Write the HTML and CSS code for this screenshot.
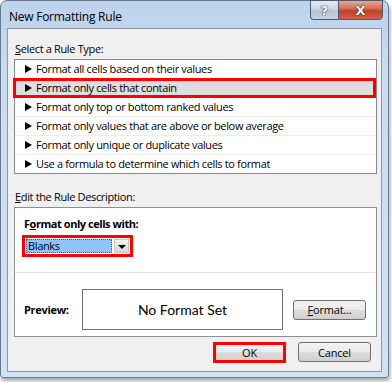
FILE: index.html
```html
<!DOCTYPE html>
<html lang="en">
<head>
    <meta charset="UTF-8">
    <title>New Formatting Rule</title>
    <link rel="stylesheet" href="styles.css">
</head>
<body>
    <div class="window">
        <div class="titlebar">
            <span class="title">New Formatting Rule</span>
            <div class="caption-buttons">
                <span class="caption-help">?</span>
                <span class="caption-close">X</span>
            </div>
        </div>

        <div class="client">
            <div class="label"><u>S</u>elect a Rule Type:</div>
            <ul class="rule-list">
                <li>Format all cells based on their values</li>
                <li class="selected">Format only cells that contain</li>
                <li>Format only top or bottom ranked values</li>
                <li>Format only values that are above or below average</li>
                <li>Format only unique or duplicate values</li>
                <li>Use a formula to determine which cells to format</li>
            </ul>

            <div class="label"><u>E</u>dit the Rule Description:</div>
            <div class="desc">
                <div class="desc-title">F<u>o</u>rmat only cells with:</div>
                <div class="combo-mark">
                    <div class="combo">
                        <span class="combo-value">Blanks</span>
                        <span class="combo-arrow"></span>
                    </div>
                </div>
                <div class="separator"></div>
                <div class="preview-row">
                    <span class="preview-label">Preview:</span>
                    <div class="preview-box">No Format Set</div>
                    <button class="btn btn-format"><u>F</u>ormat...</button>
                </div>
            </div>

            <div class="actions">
                <button class="btn btn-ok">OK</button>
                <button class="btn">Cancel</button>
            </div>
        </div>
    </div>
</body>
</html>
```

FILE: styles.css
```css
* {
    margin: 0;
    padding: 0;
    box-sizing: border-box;
}

body {
    font-family: "Open Sans", "Noto Sans", sans-serif;
    font-size: 11px;
    letter-spacing: -0.35px;
    color: #000;
    background: #fff;
    width: 392px;
    height: 382px;
    overflow: hidden;
}

.window {
    position: relative;
    width: 389px;
    height: 378px;
    padding: 0 6px 5px 6px;
    border: 1px solid #68778a;
    border-radius: 7px 7px 3px 3px;
    background: linear-gradient(180deg, #bcd3ec 0%, #c9dcf1 20%, #d1e2f4 100%);
    box-shadow: 1px 3px 4px rgba(0, 0, 0, 0.35);
}

/* title bar */
.titlebar {
    height: 27px;
    display: flex;
    align-items: center;
    padding: 3px 0 0 2px;
}

.title {
    font-size: 12px;
    letter-spacing: -0.25px;
    color: #000;
}

.caption-buttons {
    position: absolute;
    top: -1px;
    right: 5px;
    display: flex;
}

.caption-buttons span {
    height: 20px;
    display: flex;
    align-items: center;
    justify-content: center;
    font-family: "DejaVu Sans", sans-serif;
    font-weight: bold;
    letter-spacing: 0;
    color: #fff;
    border: 1px solid #4d5a69;
}

.caption-help {
    width: 28px;
    border-right: none !important;
    border-radius: 0 0 0 4px;
    font-size: 13px;
    background: linear-gradient(180deg, #e3eaf3 0%, #ccd7e4 45%, #b4c3d5 55%, #c7d5e6 100%);
    text-shadow: 0 0 1px #333, 0 0 1px #333, 0 0 1px #333;
}

.caption-close {
    width: 45px;
    border-radius: 0 0 4px 0;
    font-size: 13px;
    background: linear-gradient(180deg, #e8a597 0%, #d4735f 40%, #c2402a 55%, #d0614b 100%);
    text-shadow: 0 0 1px #3a0a00, 0 0 1px #3a0a00, 0 0 1px #3a0a00;
}

/* client area */
.client {
    height: 344px;
    border: 1px solid #8b97a5;
    background: #f0f0f0;
    padding: 12px 4px 0 6px;
}

.label {
    line-height: 15px;
    padding-left: 1px;
    margin-bottom: 3px;
}

.rule-list {
    list-style: none;
    background: #fff;
    border: 1px solid #828790;
    margin-bottom: 15px;
}

.rule-list li {
    position: relative;
    height: 19px;
    line-height: 18px;
    padding-left: 21px;
    border-bottom: 1px solid #ececec;
}

.rule-list li:last-child {
    border-bottom: none;
    height: 18px;
}

.rule-list li::before {
    content: "";
    position: absolute;
    left: 10px;
    top: 5px;
    border-left: 7px solid #000;
    border-top: 4px solid transparent;
    border-bottom: 4px solid transparent;
}

.rule-list li.selected {
    background: #dedede;
}

.rule-list li.selected::after {
    content: "";
    position: absolute;
    left: -2px;
    right: 0;
    top: -1px;
    bottom: -1px;
    border: 3px solid #f00;
}

/* rule description */
.desc {
    height: 130px;
    background: #fff;
    border: 1px solid #8e8f8f;
    padding: 8px 0 0 0;
}

.desc-title {
    font-weight: bold;
    letter-spacing: -0.45px;
    line-height: 15px;
    padding-left: 9px;
    margin-bottom: 4px;
}

.combo-mark {
    display: inline-block;
    margin-left: 7px;
    border: 3px solid #f00;
}

.combo {
    display: flex;
    width: 105px;
    height: 16px;
    background: #fff;
    padding: 1px;
}

.combo-value {
    flex: 1;
    background: #91c3fb;
    border: 1px dotted #4a5a70;
    line-height: 12px;
    padding-left: 1px;
}

.combo-arrow {
    position: relative;
    width: 15px;
    margin-left: 2px;
    border: 1px solid #c8c8c8;
    background: linear-gradient(180deg, #f4f4f4 0%, #e4e4e4 50%, #d6d6d6 100%);
}

.combo-arrow::after {
    content: "";
    position: absolute;
    left: 3px;
    top: 5px;
    border-top: 4px solid #000;
    border-left: 4px solid transparent;
    border-right: 4px solid transparent;
}

.separator {
    height: 1px;
    background: #e3e3e3;
    margin-top: 15px;
}

.preview-row {
    display: flex;
    align-items: center;
    margin-top: 16px;
    padding-left: 9px;
}

.preview-label {
    width: 58px;
    font-weight: bold;
    letter-spacing: -0.3px;
}

.preview-box {
    width: 201px;
    height: 41px;
    border: 1px solid #707070;
    display: flex;
    align-items: center;
    justify-content: center;
    font-family: Lato, "Open Sans", sans-serif;
    font-size: 14px;
    letter-spacing: 0;
}

/* buttons */
.btn {
    width: 73px;
    height: 20px;
    font-family: "Open Sans", "Noto Sans", sans-serif;
    font-size: 11px;
    letter-spacing: -0.2px;
    color: #000;
    border: 1px solid #707070;
    border-radius: 3px;
    background: linear-gradient(180deg, #f2f2f2 0%, #ebebeb 48%, #dddddd 52%, #cfcfcf 100%);
}

.btn-format {
    margin-left: 10px;
}

.actions {
    display: flex;
    justify-content: flex-end;
    gap: 12px;
    margin-top: 5px;
    padding-right: 6px;
}

.btn-ok {
    position: relative;
}

.btn-ok::after {
    content: "";
    position: absolute;
    left: -1px;
    right: -1px;
    top: -1px;
    bottom: -2px;
    border: 3px solid #f00;
}
```
